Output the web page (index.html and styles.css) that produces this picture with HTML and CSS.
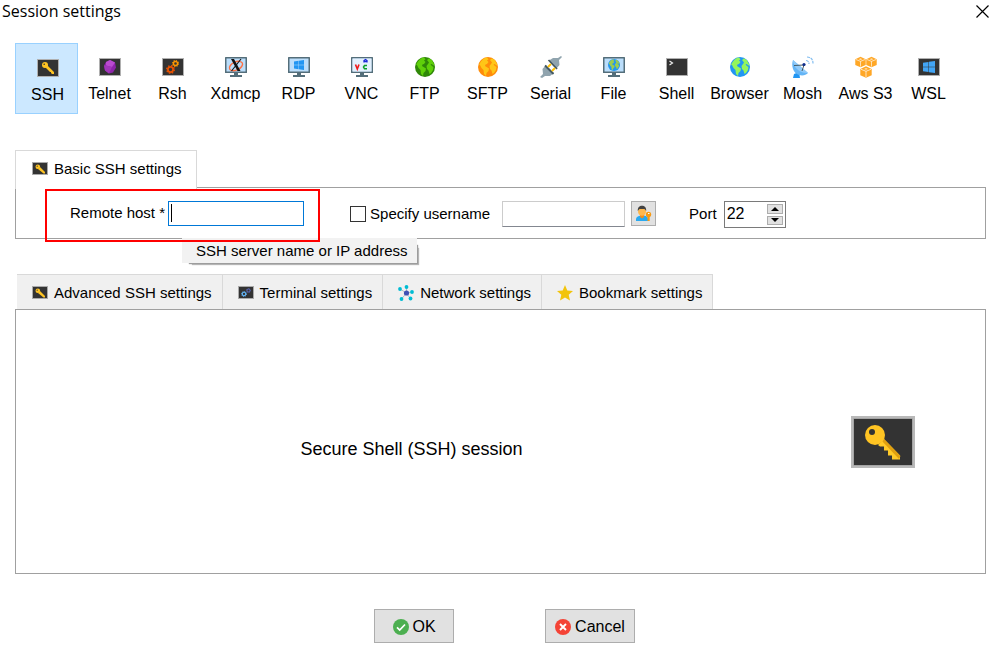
FILE: index.html
```html
<!DOCTYPE html>
<html lang="en">
<head>
<meta charset="utf-8">
<meta name="viewport" content="width=device-width, initial-scale=1">
<title>Session settings</title>
<link rel="stylesheet" href="styles.css">
</head>
<body>
<svg class="sprite" aria-hidden="true">
  <symbol id="key" viewBox="0 0 64 52">
    <rect width="64" height="52" fill="#b9b9b9"/>
    <rect x="2.500" y="2.500" width="59" height="47" fill="#8f8f8f"/>
    <rect x="3" y="3" width="58" height="46" fill="#333"/>
    <path d="M27 29l6-6 16 16.500v4h-8v-4h-4v-5h-4v-4h-4z" fill="#ffca28"/>
    <path d="M31 25l2-2 16.500 17-1.500 3z" fill="#e0a010"/>
    <circle cx="24" cy="19" r="10" fill="#ffc423"/>
    <circle cx="21" cy="16" r="3" fill="#333"/>
  </symbol>
  <symbol id="keyscreen" viewBox="0 0 23 24">
    <rect x="1.500" y="3.500" width="21" height="17" fill="#333" stroke="#b0b0b0"/>
    <path d="M9 11l2-2 7 7v2h-2l-1-1v-1h-1l-1-1z" fill="#ffc423"/>
    <circle cx="9" cy="9" r="3" fill="#ffc423"/><circle cx="8.200" cy="8.200" r=".8" fill="#333"/>
  </symbol>
  <symbol id="keysmall" viewBox="0 0 16 14">
    <rect x=".5" y=".5" width="15" height="12" fill="#333" stroke="#aaa"/>
    <path d="M6 7l2-2 5 5v1.500h-1.500z" fill="#ffc423"/><circle cx="5.800" cy="4.800" r="2.300" fill="#ffc423"/><circle cx="5.200" cy="4.200" r=".6" fill="#333"/>
  </symbol>
  <symbol id="screen" viewBox="0 0 23 24"><rect x="1.500" y="3.500" width="21" height="17" fill="#333" stroke="#b0b0b0"/></symbol>
  <symbol id="monitor" viewBox="0 0 23 24">
    <path d="M10 17h4v4h-4z" fill="#546e7a"/><path d="M6 20h12v2H6z" fill="#546e7a"/>
    <rect x="1" y="2" width="22" height="16" rx=".5" fill="#546e7a"/><rect x="2.500" y="3.500" width="19" height="13" fill="#bbdefb"/>
  </symbol>
  <symbol id="land" viewBox="0 0 20 20">
    <path d="M3 4.500C5 2 7 .8 9 .6l1.500 1.600L9 3.500 10.500 5 9 7 7.500 7.500 7 9l2 1.200 2 1.300-.5 2.500-2 2-.5 3L6 17l-.5-4L3.500 11 2 8l-1-.5zM12 3l2-1.800 3 2L19.500 8l-1.500.5L17 7l-1.500.5L17 9l1.500 1-.5 3-2 3-1.500 1-1-3.500L12 12l-.5-3L13 7l1-1.500z"/>
  </symbol>
  <symbol id="gear" viewBox="0 0 10 10">
    <circle cx="5" cy="5" r="2.900" fill="none" stroke="currentColor" stroke-width="2"/>
    <circle cx="5" cy="5" r="4.200" fill="none" stroke="currentColor" stroke-width="1.600" stroke-dasharray="1.650 1.650"/>
  </symbol>
  <symbol id="windows" viewBox="0 0 12 12"><path d="M0 1.700l5.500-.8v4.800H0zM6 .8L12 0v5.700H6zM0 6.300h5.500v4.800l-5.500-.8zM6 6.300h6V12l-6-.8z"/></symbol>
  <symbol id="cube" viewBox="0 0 12 12">
    <path d="M6 .3L11.700 3v6.200L6 11.700.3 9.200V3z" fill="#ffa726"/><path d="M1 3.300l5 2 5-2M6 5.300V11" fill="none" stroke="#fff" stroke-width=".7"/><path d="M4 3l2-1 2 1-2 .8z" fill="#ffe0b2"/>
  </symbol>
</svg>

<header class="titlebar">
  <h1 class="title">Session settings</h1>
  <button class="close" type="button" aria-label="Close"><svg width="13" height="13" viewBox="0 0 13 13"><path d="M.5.5l12 12M12.500.5l-12 12" stroke="#000" stroke-width="1.200"/></svg></button>
</header>

<main class="dialog">
  <nav class="types" aria-label="Session type">
    <button class="type selected" type="button"><svg class="type-icon"><use href="#keyscreen"/></svg>SSH</button>
    <button class="type" type="button"><svg class="type-icon" viewBox="0 0 23 24"><use href="#screen"/><path d="M12 5l5 2.500 1 5-3 5-4 1-4-3-1-5L8 7z" fill="#8e24aa"/><path d="M12 5l5 2.500-3 4.500-6-1.500L8 7z" fill="#ba4bd0"/><path d="M8 10.500l6 1.500-3 6.500-4-3-1-5z" fill="#a136ba"/></svg>Telnet</button>
    <button class="type" type="button"><svg class="type-icon" viewBox="0 0 23 24"><use href="#screen"/><use class="gear-red" href="#gear" x="5" y="10" width="9" height="9"/><use class="gear-orange" href="#gear" x="11" y="5" width="7" height="7"/></svg>Rsh</button>
    <button class="type" type="button"><svg class="type-icon" viewBox="0 0 23 24"><use href="#monitor"/><ellipse cx="12" cy="11" rx="7" ry="4" fill="none" stroke="#ff7043" stroke-width="1.400" transform="rotate(-25 12 11)"/><path d="M7 4h3l6.500 12h-3z" fill="#111"/><path d="M17 4l-9.500 12" stroke="#111" stroke-width="1.100"/></svg>Xdmcp</button>
    <button class="type" type="button"><svg class="type-icon" viewBox="0 0 23 24"><use href="#monitor"/><use href="#windows" x="7" y="5" width="10" height="10" fill="#2196f3"/></svg>RDP</button>
    <button class="type" type="button"><svg class="type-icon" viewBox="0 0 23 24"><use href="#monitor"/><rect x="2.500" y="3.500" width="19" height="13" fill="#e3f0fd"/><path d="M5.500 9.500l1.800 4.500L9 9.500" fill="none" stroke="#f01818" stroke-width="1.600"/><path d="M14 7.500V5.500l1.500-1L17 5.500v2M14 6.500h3" fill="none" stroke="#1b28d8" stroke-width="1.300"/><path d="M17 10.500h-2.500L13.500 12l1 1.700H17" fill="none" stroke="#0b9d28" stroke-width="1.500"/></svg>VNC</button>
    <button class="type" type="button"><svg class="type-icon" viewBox="0 0 23 24"><circle cx="12" cy="12" r="10" fill="#2f8708"/><use href="#land" x="2" y="2" width="20" height="20" fill="#5fd00a"/></svg>FTP</button>
    <button class="type" type="button"><svg class="type-icon" viewBox="0 0 23 24"><circle cx="12" cy="12" r="10" fill="#ff8c0a"/><use href="#land" x="2" y="2" width="20" height="20" fill="#ffc617"/></svg>SFTP</button>
    <button class="type" type="button"><svg class="type-icon" viewBox="0 0 23 24"><path d="M1 22l3-3-.5-5L7 10l8 8-4 3H6l-3 2zM23 2l-3 3 .5 5-3 3.500-7.500-8L14 3h5l3-2z" fill="#90a4ae"/><path d="M6 10.500l8.500 8.500M9.500 5l8.500 9" stroke="#455a64" stroke-width="1.800"/><path d="M9 12l3-3M13 16l3-3" stroke="#ffc107" stroke-width="2"/></svg>Serial</button>
    <button class="type" type="button"><svg class="type-icon" viewBox="0 0 23 24"><use href="#monitor"/><circle cx="12" cy="10" r="6" fill="#2196f3"/><use href="#land" x="6" y="4" width="12" height="12" fill="#9ccc50"/></svg>File</button>
    <button class="type" type="button"><svg class="type-icon" viewBox="0 0 23 24"><use href="#screen"/><path d="M4.500 6l3 2-3 2" fill="none" stroke="#eee" stroke-width="1.200"/></svg>Shell</button>
    <button class="type" type="button"><svg class="type-icon" viewBox="0 0 23 24"><circle cx="12" cy="12" r="10" fill="#2196f3"/><use href="#land" x="2" y="2" width="20" height="20" fill="#94f55c"/></svg>Browser</button>
    <button class="type" type="button"><svg class="type-icon" viewBox="0 0 23 24"><path d="M3 19l5-2 1 6H2z" fill="#2196f3"/><path d="M2 5c-2 6 0 13 6 15 4 1 7 0 9-2z" fill="#64b5f6"/><path d="M2 5l15 13c-7 1-15-5-15-13z" fill="#90caf9"/><path d="M3 10.500L13 10 11 16" fill="none" stroke="#455a64"/><circle cx="13" cy="9.500" r="1.600" fill="#0d2c8c"/><path d="M15 5.500c2 .2 3 1.500 3 3.500M16 2c4 .2 6 2.500 6 6.500" fill="none" stroke="#81bdf0" stroke-width="1.200" stroke-dasharray="3 .8"/></svg>Mosh</button>
    <button class="type" type="button"><svg class="type-icon" viewBox="0 0 23 24"><use href="#cube" x="1" y="1" width="11" height="12"/><use href="#cube" x="12" y="1" width="11" height="12"/><use href="#cube" x="6" y="11" width="12" height="12"/></svg>Aws S3</button>
    <button class="type" type="button"><svg class="type-icon" viewBox="0 0 23 24"><use href="#screen"/><use href="#windows" x="6" y="6" width="12" height="12" fill="#42a5f5"/></svg>WSL</button>
  </nav>

  <section class="basic">
    <h2 class="tab current"><svg class="tab-icon"><use href="#keysmall"/></svg>Basic SSH settings</h2>
    <form class="panel fields">
      <div class="field host">
        <label for="host">Remote host *</label>
        <span class="host-box"><input class="text-input focused" id="host" type="text" aria-describedby="host-tip"></span>
        <div class="tooltip" id="host-tip" role="tooltip">SSH server name or IP address</div>
      </div>
      <div class="field user">
        <input class="check" id="specify" type="checkbox"><label for="specify">Specify username</label>
        <input class="text-input username" type="text" aria-label="Username">
        <button class="user-pick" type="button" aria-label="Choose user"><svg width="17" height="17" viewBox="0 0 17 17"><path d="M1 16v-2c0-2 2-3 5-3.500h3c3 .5 4 1.500 4 3.500v2z" fill="#29a9f0"/><path d="M5 9h4v3l-2 1.500L5 12z" fill="#f08c1a"/><ellipse cx="7" cy="6.500" rx="4" ry="4.300" fill="#ffb74d"/><path d="M2.800 6C2.500 2.500 4.500.7 7 .7S11.500 2.500 11.200 6L9.500 4h-5z" fill="#424242"/><circle cx="13.500" cy="9.500" r="2.700" fill="#f79a12"/><path d="M12.500 11h2.200v5h-2.200z" fill="#f79a12"/><path d="M13 8.500h1.500" stroke="#fff"/></svg></button>
      </div>
      <div class="field port">
        <label for="port">Port</label>
        <span class="spin">
          <input class="spin-input" id="port" type="text" inputmode="numeric" value="22">
          <span class="spin-buttons">
            <button class="step" type="button" aria-label="Increase port"><svg width="8" height="4" viewBox="0 0 8 4"><path d="M0 4l4-4 4 4z"/></svg></button>
            <button class="step" type="button" aria-label="Decrease port"><svg width="8" height="4" viewBox="0 0 8 4"><path d="M0 0l4 4 4-4z"/></svg></button>
          </span>
        </span>
      </div>
    </form>
  </section>

  <section class="extra">
    <div class="tabs">
      <button class="tab" type="button"><svg class="tab-icon"><use href="#keysmall"/></svg>Advanced SSH settings</button>
      <button class="tab" type="button"><svg class="tab-icon" viewBox="0 0 16 14"><rect x=".5" y=".5" width="15" height="12" fill="#333" stroke="#aaa"/><use class="gear-blue" href="#gear" x="3" y="5" width="6" height="6"/><use class="gear-indigo" href="#gear" x="8" y="2" width="5" height="5"/></svg>Terminal settings</button>
      <button class="tab" type="button"><svg class="tab-icon tall" viewBox="0 0 16 16"><path d="M8.500 8V2M8.500 8L2 4M8.500 8L14 7M8.500 8L3.500 14M8.500 8l4 6" stroke="#b0bec5"/><circle cx="8.500" cy="8" r="2.600" fill="#3f51b5"/><g fill="#00bcd4"><circle cx="8.500" cy="2" r="1.900"/><circle cx="2" cy="4" r="1.900"/><circle cx="14" cy="7" r="1.900"/><circle cx="3.500" cy="14" r="1.900"/><circle cx="12.500" cy="13.500" r="1.900"/></g></svg>Network settings</button>
      <button class="tab" type="button"><svg class="tab-icon tall" viewBox="0 0 16 16"><path d="M8 0l2.300 5.400 5.700.5-4.300 3.900L13 15.500l-5-3-5 3 1.300-5.700L0 5.900l5.700-.5z" fill="#f2c40c"/></svg>Bookmark settings</button>
    </div>
    <div class="panel summary">
      <p class="summary-text">Secure Shell (SSH) session</p>
      <svg class="summary-icon" width="64" height="52" aria-hidden="true"><use href="#key"/></svg>
    </div>
  </section>

  <footer class="actions">
    <button class="action ok" type="button"><svg width="16" height="16" viewBox="0 0 16 16"><circle cx="8" cy="8" r="8" fill="#4caf50"/><path d="M4 8.300l2.700 2.700 5.300-5.500" fill="none" stroke="#fff" stroke-width="1.700"/></svg>OK</button>
    <button class="action" type="button"><svg width="16" height="16" viewBox="0 0 16 16"><circle cx="8" cy="8" r="8" fill="#f44336"/><path d="M5 5l6 6M11 5l-6 6" stroke="#fff" stroke-width="1.900"/></svg>Cancel</button>
  </footer>
</main>
</body>
</html>
```
FILE: styles.css
```css
* { box-sizing: border-box; }

body {
  margin: 0;
  background: #fff;
  color: #000;
  font: 15px/20px "Liberation Sans", Arial, sans-serif;
}

button, input { font: inherit; color: inherit; margin: 0; border-radius: 0; }
button { padding: 0; cursor: pointer; }
svg { flex: none; display: block; }
.sprite { position: absolute; width: 0; height: 0; }

.titlebar {
  display: flex;
  justify-content: space-between;
  height: 24px;
  padding: 0 13px 0 2px;
}
.title {
  margin: 0;
  font: 400 16px/22px "Open Sans", "Noto Sans", sans-serif;
}
.close { align-self: flex-start; padding-top: 5px; border: 0; background: none; }

.dialog { padding: 19px 16px 8px 15px; }

.types { display: flex; margin-bottom: 36px; }
.type {
  display: flex;
  flex-direction: column;
  align-items: center;
  width: 63px;
  height: 71px;
  padding-top: 11px;
  gap: 5px;
  border: 1px solid transparent;
  background: none;
  font-size: 16px;
  white-space: nowrap;
}
.type.selected { padding: 12px 0 0 2px; border-color: #99d1ff; background: #cce8ff; }
.type-icon { width: 23px; height: 24px; }
.gear-red { color: #e65100; }
.gear-orange { color: #ff9800; }
.gear-blue { color: #64b5f6; }
.gear-indigo { color: #5c6bc0; }

.panel { border: 1px solid #a0a0a0; }

.tab {
  display: flex;
  align-items: center;
  gap: 6px;
  height: 35px;
  padding: 2px 10px 0 15px;
  border: solid #d9d9d9;
  border-width: 1px 1px 0 0;
  background: #f0f0f0;
  white-space: nowrap;
}
.tab.current {
  position: relative;
  width: fit-content;
  height: 39px;
  margin: 0 0 -2px;
  padding: 0 14px 2px 16px;
  border-width: 1px 1px 0 1px;
  background: #fff;
  font-size: 15px;
  font-weight: 400;
}
.tab-icon { width: 16px; height: 14px; }
.tab-icon.tall { height: 16px; }

.fields { display: flex; padding: 13px 0 10px 54px; }
.field { display: flex; align-items: flex-start; height: 27px; line-height: 25px; }

.text-input { height: 25px; padding: 0 3px; border: 1px solid #ccc; background: #fff; outline: 0; }
.text-input.focused { display: block; width: 136px; border-color: #0078d7; }

.host { position: relative; gap: 3px; margin-right: 46px; line-height: 24px; }
.host::after {
  content: "";
  position: absolute;
  inset: -12px -16px -14px -25px;
  border: 2px solid #f00;
  pointer-events: none;
}
.host-box { position: relative; }
.host-box::after {
  content: "";
  position: absolute;
  left: 3px;
  top: 3px;
  width: 1px;
  height: 18px;
  background: #000;
}
.tooltip {
  position: absolute;
  left: 112px;
  top: 37px;
  padding: 0 10px 0 14px;
  background: #f2f2f2;
  box-shadow: 4px 4px 1px -3px #9d9d9d, 6px 6px 1px -4px #bbb;
  line-height: 25px;
  white-space: nowrap;
}

.check {
  appearance: none;
  width: 16px;
  height: 16px;
  margin: 5px 4px 0 0;
  border: 1px solid #333;
  background: #fff;
}
.check:checked { background: #0078d7; }
.username { width: 123px; height: 26px; margin: 0 6px 0 12px; border-bottom-color: #838790; }
.user-pick { display: grid; place-items: center; width: 25px; height: 25px; border: 1px solid #adadad; background: #e1e1e1; }

.port { gap: 7px; margin-left: 33px; }
.spin { display: flex; width: 62px; height: 27px; padding: 2px; border: 1px solid #7a7a7a; }
.spin-input { flex: 1; min-width: 0; height: 18px; padding: 0; border: 0; outline: 0; background: none; font-size: 16px; }
.spin-buttons { display: grid; gap: 2px; width: 16px; }
.step { display: grid; place-items: center; border: 1px solid #adadad; background: #e1e1e1; }

.extra { margin-top: 35px; }
.tabs { display: flex; padding-left: 2px; }
.summary {
  display: grid;
  grid-template-columns: 1fr 64px;
  align-items: center;
  column-gap: 44px;
  min-height: 265px;
  padding-right: 70px;
}
.summary-text { margin: 14px 0 0; font-size: 18px; text-align: center; }

.actions { display: flex; justify-content: center; gap: 91px; margin-top: 35px; padding-left: 8px; }
.action {
  display: flex;
  align-items: center;
  justify-content: center;
  gap: 4px;
  height: 34px;
  padding: 1px 9px 0;
  border: 1px solid #adadad;
  background: #e1e1e1;
  font-size: 16px;
}
.action.ok { width: 80px; }
```
